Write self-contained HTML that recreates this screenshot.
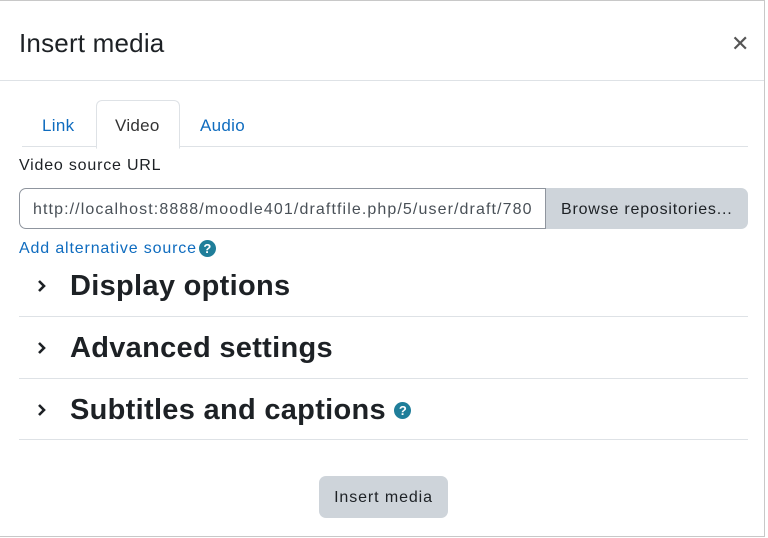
<!DOCTYPE html>
<html><head><meta charset="utf-8"><style>
body{margin:0;width:768px;height:538px;background:#fff;font-family:"Liberation Sans",sans-serif;color:#1d2125;position:relative;overflow:hidden}
.frame{position:absolute;left:-2px;top:0;width:766px;height:535px;border:1px solid #c8c8c8;border-left:none}
.a{position:absolute}
.title{left:19px;top:28px;font-size:26px;letter-spacing:0.2px}
.close{left:731px;top:31px;font-size:22px;color:#555}
.hr{height:1px;background:#dee2e6}
.tab{font-size:17px;color:#0f6cbf;letter-spacing:0.3px}
.q{display:inline-block;width:17px;height:17px;border-radius:50%;background:#1f7e9a;color:#fff;font-size:13px;font-weight:bold;text-align:center;line-height:17px;vertical-align:middle;letter-spacing:0}
.h{font-size:29px;font-weight:bold;left:70px;letter-spacing:0.3px}
.chev{left:36px;width:12px;height:12px}
</style></head><body>
<div class="frame"></div>
<div class="a title">Insert media</div>
<div class="a close">✕</div>
<div class="a hr" style="left:0;top:80px;width:764px"></div>
<div class="a hr" style="left:22px;top:146px;width:726px"></div>
<div class="a" style="left:96px;top:100px;width:82px;height:47px;border:1px solid #dee2e6;border-bottom:1px solid #fff;border-radius:6px 6px 0 0;background:#fff"></div>
<div class="a tab" style="left:42px;top:116px">Link</div>
<div class="a tab" style="left:115px;top:116px;color:#333">Video</div>
<div class="a tab" style="left:200px;top:116px">Audio</div>
<div class="a" style="left:19px;top:157px;font-size:16px;letter-spacing:0.8px">Video source URL</div>
<div class="a" style="left:19px;top:188px;width:527px;height:41px;border:1px solid #8f959e;border-radius:7px 0 0 7px;box-sizing:border-box"></div>
<div class="a" style="left:33px;top:201px;font-size:16px;color:#495057;letter-spacing:1.1px;white-space:nowrap">http://localhost:8888/moodle401/draftfile.php/5/user/draft/780</div>
<div class="a" style="left:546px;top:188px;width:202px;height:41px;background:#ced4da;border-radius:0 7px 7px 0"></div>
<div class="a" style="left:561px;top:201px;font-size:16px;color:#1d2125;letter-spacing:0.8px">Browse repositories...</div>
<div class="a" style="left:19px;top:240px;font-size:16px;color:#0f6cbf;letter-spacing:0.85px">Add alternative source<span class="q" style="margin-left:2px">?</span></div>
<svg class="a chev" style="top:280px" viewBox="0 0 12 12"><path d="M3 1l5 5-5 5" fill="none" stroke="#1d2125" stroke-width="2.6"/></svg>
<div class="a h" style="top:270px">Display options</div>
<div class="a hr" style="left:19px;top:316px;width:729px"></div>
<svg class="a chev" style="top:342px" viewBox="0 0 12 12"><path d="M3 1l5 5-5 5" fill="none" stroke="#1d2125" stroke-width="2.6"/></svg>
<div class="a h" style="top:332px">Advanced settings</div>
<div class="a hr" style="left:19px;top:378px;width:729px"></div>
<svg class="a chev" style="top:404px" viewBox="0 0 12 12"><path d="M3 1l5 5-5 5" fill="none" stroke="#1d2125" stroke-width="2.6"/></svg>
<div class="a h" style="top:394px">Subtitles and captions <span class="q" style="vertical-align:4px">?</span></div>
<div class="a hr" style="left:19px;top:439px;width:729px"></div>
<div class="a" style="left:319px;top:476px;width:129px;height:42px;background:#ced4da;border-radius:7px;font-size:16px;text-align:center;line-height:43px;letter-spacing:0.9px">Insert media</div>
</body></html>
